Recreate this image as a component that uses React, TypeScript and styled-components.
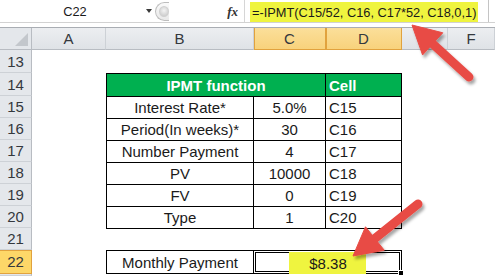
import React from "react";
import styled, { createGlobalStyle } from "styled-components";

const GlobalStyle = createGlobalStyle`
  html, body {
    margin: 0;
    padding: 0;
    background: #fff;
    overflow: hidden;
  }
  body {
    font-family: "Liberation Sans", Arial, sans-serif;
  }
`;

const Window = styled.div`
  position: relative;
  width: 495px;
  height: 276px;
  overflow: hidden;
  background: #fff;
  display: flex;
  flex-direction: column;
`;

const FormulaBar = styled.div`
  display: flex;
  height: 22px;
  border-bottom: 1px solid #d2d2d2;
  font-size: 12.8px;
  color: #1a1a1a;
`;

const NameBox = styled.div`
  width: 155px;
  display: flex;
  align-items: center;
`;

const NameText = styled.span`
  flex: 1;
  text-align: center;
  padding-left: 4px;
`;

const DropArrow = styled.span`
  width: 0;
  height: 0;
  border-left: 3.5px solid transparent;
  border-right: 3.5px solid transparent;
  border-top: 4px solid #3a3a3a;
  margin-right: 3px;
`;

const FxBox = styled.div`
  width: 89px;
  display: flex;
  align-items: center;
  padding-top: 1px;
`;

const Splitter = styled.div`
  width: 14px;
  height: 19px;
  box-sizing: border-box;
  border: 1px solid #bdbdbd;
  border-right: none;
  border-radius: 10px 0 0 10px;
  display: flex;
  align-items: center;
  padding-left: 3px;
  background: linear-gradient(#fafafa, #e9e9e9);
`;

const Knob = styled.span`
  width: 9px;
  height: 9px;
  border-radius: 50%;
  background: radial-gradient(circle at 50% 40%, #f4f4f4, #c4c4c4);
  border: 1px solid #d0d0d0;
`;

const FxLabel = styled.span`
  margin-left: auto;
  margin-right: 6px;
  font-family: "Liberation Serif", "Times New Roman", serif;
  font-style: italic;
  font-weight: bold;
  font-size: 13px;
  color: #333;
`;

const FormulaInput = styled.div`
  flex: 1;
  display: flex;
  align-items: stretch;
  border-left: 1px solid #d6d6d6;
  border-right: 1px solid #c4c4c4;
  margin-right: 6px;
  padding: 2px 0 0 5px;
`;

const Marked = styled.span`
  background: #eff43f;
  display: flex;
  align-items: center;
  padding: 0 2px;
`;

const Gap = styled.div`
  height: 4px;
  border-bottom: 1px solid #a9adb3;
`;

const Sheet = styled.div`
  flex: 1;
  display: grid;
  grid-template-columns: 32px 74px 148px 72px 76px 46px 1fr;
  grid-template-rows: 22px 23px 23px repeat(7, 22px) 24px 1fr;
  font-size: 15px;
  color: #1a1a1a;
`;

const Corner = styled.div`
  position: relative;
  background: #e4e7eb;
  border-right: 1px solid #b8bcc2;
  border-bottom: 1px solid #b8bcc2;

  &::after {
    content: "";
    position: absolute;
    right: 3px;
    bottom: 3px;
    width: 0;
    height: 0;
    border-left: 13px solid transparent;
    border-bottom: 13px solid #c3c7cc;
  }
`;

const ColHeader = styled.div<{ $active?: boolean }>`
  display: flex;
  align-items: center;
  justify-content: center;
  font-size: 15px;
  color: #34383d;
  background: ${(p) =>
    p.$active ? "linear-gradient(#fbdf9a, #f8d27c)" : "linear-gradient(#eceef1, #dfe2e6)"};
  border-right: 1px solid ${(p) => (p.$active ? "#e1a23e" : "#cdd1d6")};
  border-bottom: 1px solid ${(p) => (p.$active ? "#e1a23e" : "#b8bcc2")};
  box-shadow: ${(p) => (p.$active ? "inset 1px 0 0 #e1a23e" : "none")};
`;

const RowHeader = styled.div<{ $active?: boolean }>`
  grid-column: 1;
  display: flex;
  align-items: center;
  justify-content: center;
  font-size: 15px;
  color: #34383d;
  background: ${(p) => (p.$active ? "#fdd768" : "#e4e7eb")};
  border-right: 1px solid ${(p) => (p.$active ? "#e1a23e" : "#b8bcc2")};
  border-bottom: 1px solid ${(p) => (p.$active ? "#e1a23e" : "#cdd1d6")};
  box-shadow: ${(p) => (p.$active ? "inset 0 1px 0 #e1a23e" : "none")};
`;

const DataTable = styled.div`
  grid-column: 3 / 6;
  grid-row: 3 / 10;
  align-self: start;
  display: grid;
  grid-template-columns: 147px 72px 76px;
  grid-template-rows: 23px repeat(6, 22px);
  border-top: 1px solid #000;
  border-left: 1px solid #000;
`;

const Cell = styled.div<{ $align?: "left" | "center"; $span?: number }>`
  grid-column: span ${(p) => p.$span ?? 1};
  display: flex;
  align-items: center;
  justify-content: ${(p) => (p.$align === "left" ? "flex-start" : "center")};
  padding: 0 3px;
  border-right: 1px solid #000;
  border-bottom: 1px solid #000;
  white-space: nowrap;
`;

const HeadCell = styled(Cell)`
  background: #00b050;
  color: #fff;
  font-weight: bold;
`;

const PaymentLabel = styled.div`
  grid-column: 3;
  grid-row: 11;
  display: flex;
  align-items: center;
  justify-content: center;
  border: 1px solid #000;
`;

const PaymentValue = styled.div`
  grid-column: 4 / 6;
  grid-row: 11;
  position: relative;
  display: flex;
  justify-content: center;
  border: 3px double #000;
  margin-left: -1px;

  &::after {
    content: "";
    position: absolute;
    right: -5px;
    bottom: -5px;
    width: 4px;
    height: 4px;
    background: #000;
    border: 1px solid #fff;
  }
`;

const ValueMark = styled.span`
  display: flex;
  align-items: center;
  padding: 0 19px 0 20px;
  margin-top: -1px;
  margin-bottom: -3px;
  background: #eff43f;
`;

const Overlay = styled.svg`
  position: absolute;
  left: 0;
  top: 0;
  pointer-events: none;
`;

type Arrow = { tail: [number, number]; tip: [number, number] };

const arrows: Arrow[] = [
  { tail: [469, 77], tip: [412, 25] },
  { tail: [418, 204], tip: [353, 256] },
];

function arrowPoints({ tail, tip }: Arrow) {
  const dx = tip[0] - tail[0];
  const dy = tip[1] - tail[1];
  const len = Math.hypot(dx, dy);
  const ux = dx / len;
  const uy = dy / len;
  const nx = -uy;
  const ny = ux;
  const headLen = 28;
  const half = 15;
  const bx = tip[0] - ux * headLen;
  const by = tip[1] - uy * headLen;
  const head = [
    [tip[0], tip[1]],
    [bx + nx * half, by + ny * half],
    [bx - nx * half, by - ny * half],
  ]
    .map((p) => p.join(","))
    .join(" ");
  return { head, bx: bx + ux * 2, by: by + uy * 2 };
}

const rows = [
  { label: "Interest Rate*", value: "5.0%", cell: "C15" },
  { label: "Period(In weeks)*", value: "30", cell: "C16" },
  { label: "Number Payment", value: "4", cell: "C17" },
  { label: "PV", value: "10000", cell: "C18" },
  { label: "FV", value: "0", cell: "C19" },
  { label: "Type", value: "1", cell: "C20" },
];

const columns = ["A", "B", "C", "D", "E", "F"];
const rowNumbers = [13, 14, 15, 16, 17, 18, 19, 20, 21, 22];

export default function App() {
  return (
    <Window>
      <GlobalStyle />
      <FormulaBar>
        <NameBox>
          <NameText>C22</NameText>
          <DropArrow />
        </NameBox>
        <FxBox>
          <Splitter>
            <Knob />
          </Splitter>
          <FxLabel>fx</FxLabel>
        </FxBox>
        <FormulaInput>
          <Marked>=-IPMT(C15/52, C16, C17*52, C18,0,1)</Marked>
        </FormulaInput>
      </FormulaBar>
      <Gap />
      <Sheet>
        <Corner />
        {columns.map((c) => (
          <ColHeader key={c} $active={c === "C" || c === "D"}>
            {c}
          </ColHeader>
        ))}
        {rowNumbers.map((n) => (
          <RowHeader key={n} $active={n === 22}>
            {n}
          </RowHeader>
        ))}
        {/* row 23 is only a sliver at the bottom edge */}
        <RowHeader />
        <DataTable>
          <HeadCell $span={2}>IPMT function</HeadCell>
          <HeadCell $align="left">Cell</HeadCell>
          {rows.map((r) => (
            <React.Fragment key={r.cell}>
              <Cell>{r.label}</Cell>
              <Cell>{r.value}</Cell>
              <Cell $align="left">{r.cell}</Cell>
            </React.Fragment>
          ))}
        </DataTable>
        <PaymentLabel>Monthly Payment</PaymentLabel>
        <PaymentValue>
          <ValueMark>$8.38</ValueMark>
        </PaymentValue>
      </Sheet>
      <Overlay width={495} height={276} viewBox="0 0 495 276">
        <defs>
          <filter id="arrowShadow" x="-20%" y="-20%" width="140%" height="140%">
            <feDropShadow dx="2" dy="3" stdDeviation="1.6" floodColor="#000" floodOpacity="0.35" />
          </filter>
        </defs>
        {arrows.map((a, i) => {
          const { head, bx, by } = arrowPoints(a);
          return (
            <g key={i} filter="url(#arrowShadow)" fill="#e84c45" stroke="#e84c45">
              <line
                x1={a.tail[0]}
                y1={a.tail[1]}
                x2={bx}
                y2={by}
                strokeWidth={9}
                strokeLinecap="round"
              />
              <polygon points={head} strokeWidth={1} strokeLinejoin="round" />
            </g>
          );
        })}
      </Overlay>
    </Window>
  );
}
